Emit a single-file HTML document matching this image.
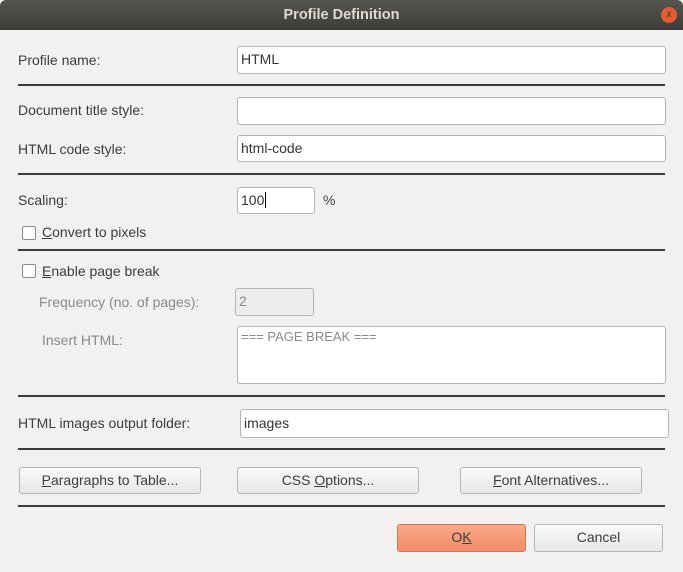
<!DOCTYPE html><html><head><style>
body{margin:0;width:683px;height:572px;background:#f2f1f0;font-family:"Liberation Sans",sans-serif;font-size:14px;color:#3c3c3c;position:relative;overflow:hidden}
.t{position:absolute;left:0;top:0;width:683px;height:30px;background:linear-gradient(#57554f,#3d3c38);border-radius:6px 6px 0 0;color:#dfdbd2;font-weight:bold;font-size:14.5px;text-align:center;line-height:30px}
.x{position:absolute;right:6px;top:7px;width:16px;height:16px;border-radius:50%;background:#e35d36;color:#5a2b1a;font-size:10px;line-height:16px;text-align:center;font-weight:normal}
.l{position:absolute;line-height:16px}
.i{position:absolute;background:#fff;border:1px solid #b6b3ae;border-radius:3px;box-sizing:border-box;padding-left:3px;line-height:25px;color:#333}
.s{position:absolute;left:18px;width:647px;height:2px;background:#3c3c3c}
.cb{position:absolute;left:22px;width:12px;height:12px;border:1px solid #8d8984;border-radius:2px;background:#fff}
.b{position:absolute;height:27px;box-sizing:border-box;border:1px solid #b9b5b0;border-radius:3px;background:linear-gradient(#fafaf9,#e9e7e5);text-align:center;line-height:25px;color:#3c3c3c}
.g{color:#8b8984}
</style></head><body>
<div class="t">Profile Definition<div class="x">x</div></div>
<div class="l" style="left:18px;top:52px">Profile name:</div>
<div class="i" style="left:237px;top:46px;width:429px;height:28px">HTML</div>
<div class="s" style="top:84px"></div>
<div class="l" style="left:18px;top:102px">Document title style:</div>
<div class="i" style="left:237px;top:97px;width:429px;height:28px"></div>
<div class="l" style="left:18px;top:141px">HTML code style:</div>
<div class="i" style="left:237px;top:135px;width:429px;height:27px">html-code</div>
<div class="s" style="top:173px"></div>
<div class="l" style="left:18px;top:192px">Scaling:</div>
<div class="i" style="left:237px;top:187px;width:78px;height:27px">100<span style="border-left:1px solid #000;margin-left:1px"></span></div>
<div class="l" style="left:323px;top:192px">%</div>
<div class="cb" style="top:226px"></div>
<div class="l" style="left:42px;top:224px"><u>C</u>onvert to pixels</div>
<div class="s" style="top:249px"></div>
<div class="cb" style="top:264px"></div>
<div class="l" style="left:42px;top:263px"><u>E</u>nable page break</div>
<div class="l g" style="left:39px;top:294px">Frequency (no. of pages):</div>
<div class="i g" style="left:235px;top:288px;width:79px;height:28px;background:#eeedec">2</div>
<div class="l g" style="left:42px;top:332px">Insert HTML:</div>
<div class="i g" style="left:237px;top:326px;width:429px;height:58px;line-height:20px;font-size:13px">=== PAGE BREAK ===</div>
<div class="s" style="top:395px"></div>
<div class="l" style="left:18px;top:415px">HTML images output folder:</div>
<div class="i" style="left:240px;top:409px;width:429px;height:29px;line-height:27px">images</div>
<div class="s" style="top:448px"></div>
<div class="b" style="left:19px;top:467px;width:182px"><u>P</u>aragraphs to Table...</div>
<div class="b" style="left:237px;top:467px;width:182px">CSS <u>O</u>ptions...</div>
<div class="b" style="left:460px;top:467px;width:182px"><u>F</u>ont Alternatives...</div>
<div class="s" style="top:505px"></div>
<div class="b" style="left:397px;top:524px;width:129px;height:28px;background:linear-gradient(#fba987,#f28d68);border-color:#c9765a">O<u>K</u></div>
<div class="b" style="left:534px;top:524px;width:129px;height:28px">Cancel</div>
</body></html>
